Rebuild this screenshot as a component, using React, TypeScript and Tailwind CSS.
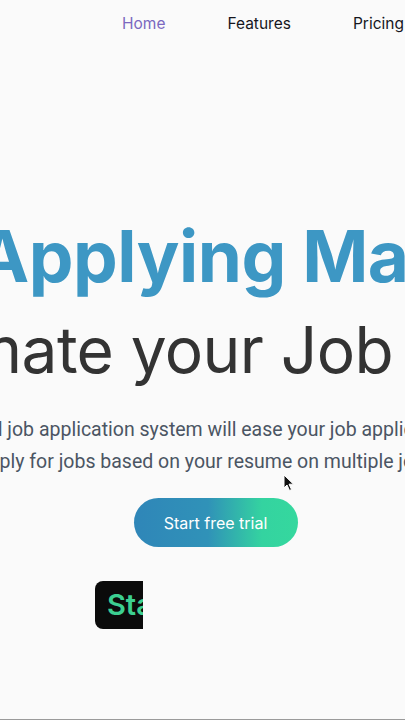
import React from 'react';

const navItems = ['Home', 'Features', 'Pricing', 'Contact'];

const Cursor: React.FC = () => (
  <svg width="12" height="18" viewBox="0 0 12 18" className="absolute left-[283px] top-[474px]">
    <path d="M1 1 L1 14 L4 11 L6.5 16.5 L8.5 15.5 L6 10.2 L10.5 10.2 Z" fill="#111" stroke="#fff" strokeWidth="1" />
  </svg>
);

export default function App() {
  return (
    <div className="relative h-[720px] w-full overflow-hidden bg-[#fafafa] border-b border-[#9a9a9a]">
      <nav
        className="flex h-[46px] items-center gap-[62px] whitespace-nowrap pl-[122px] pt-[2px] text-[15.5px]"
        style={{ fontFamily: 'Inter, sans-serif' }}
      >
        {navItems.map((item, i) => (
          <a key={item} className={i === 0 ? 'text-[#7b68c0]' : 'text-[#16161d]'}>
            {item}
          </a>
        ))}
      </nav>

      <section className="flex flex-col items-center pt-[168px]" style={{ fontFamily: 'Inter, sans-serif' }}>
        <h1 className="flex w-full justify-center whitespace-nowrap pl-[14px] text-[71px] font-bold leading-[84px] tracking-[-0.5px] text-[#3d97c4]">
          Stop Applying Manually
        </h1>
        <h2 className="mt-[10px] flex w-full justify-center whitespace-nowrap pl-[42px] text-[64px] font-normal leading-[84px] tracking-[-0.6px] text-[#333]">
          Automate your Job Search
        </h2>

        <div
          className="mt-[22px] flex w-full flex-col items-center whitespace-nowrap text-[19.5px] leading-[32px] text-[#4b5563]"
          style={{ fontFamily: 'Roboto, sans-serif' }}
        >
          <p>Our AI-powered job application system will ease your job application process.</p>
          <p className="pl-[18px]">It will apply for jobs based on your resume on multiple job boards.</p>
        </div>

        <button
          className="ml-[26px] mt-[20px] h-[49px] w-[164px] rounded-full bg-[linear-gradient(90deg,#2f86b8_0%,#3092b8_45%,#34d3a0_78%,#35d89e_100%)] text-[16px] text-white"
        >
          Start free trial
        </button>

        <div className="mt-[34px] flex w-full pl-[95px]">
          <div className="flex h-[48px] w-[48px] items-center overflow-hidden rounded-l-[8px] bg-[#0b0b0b] pl-[12px]">
            <span className="whitespace-nowrap text-[29px] font-semibold text-[#3ccf91]">Start</span>
          </div>
        </div>
      </section>

      <Cursor />
    </div>
  );
}
